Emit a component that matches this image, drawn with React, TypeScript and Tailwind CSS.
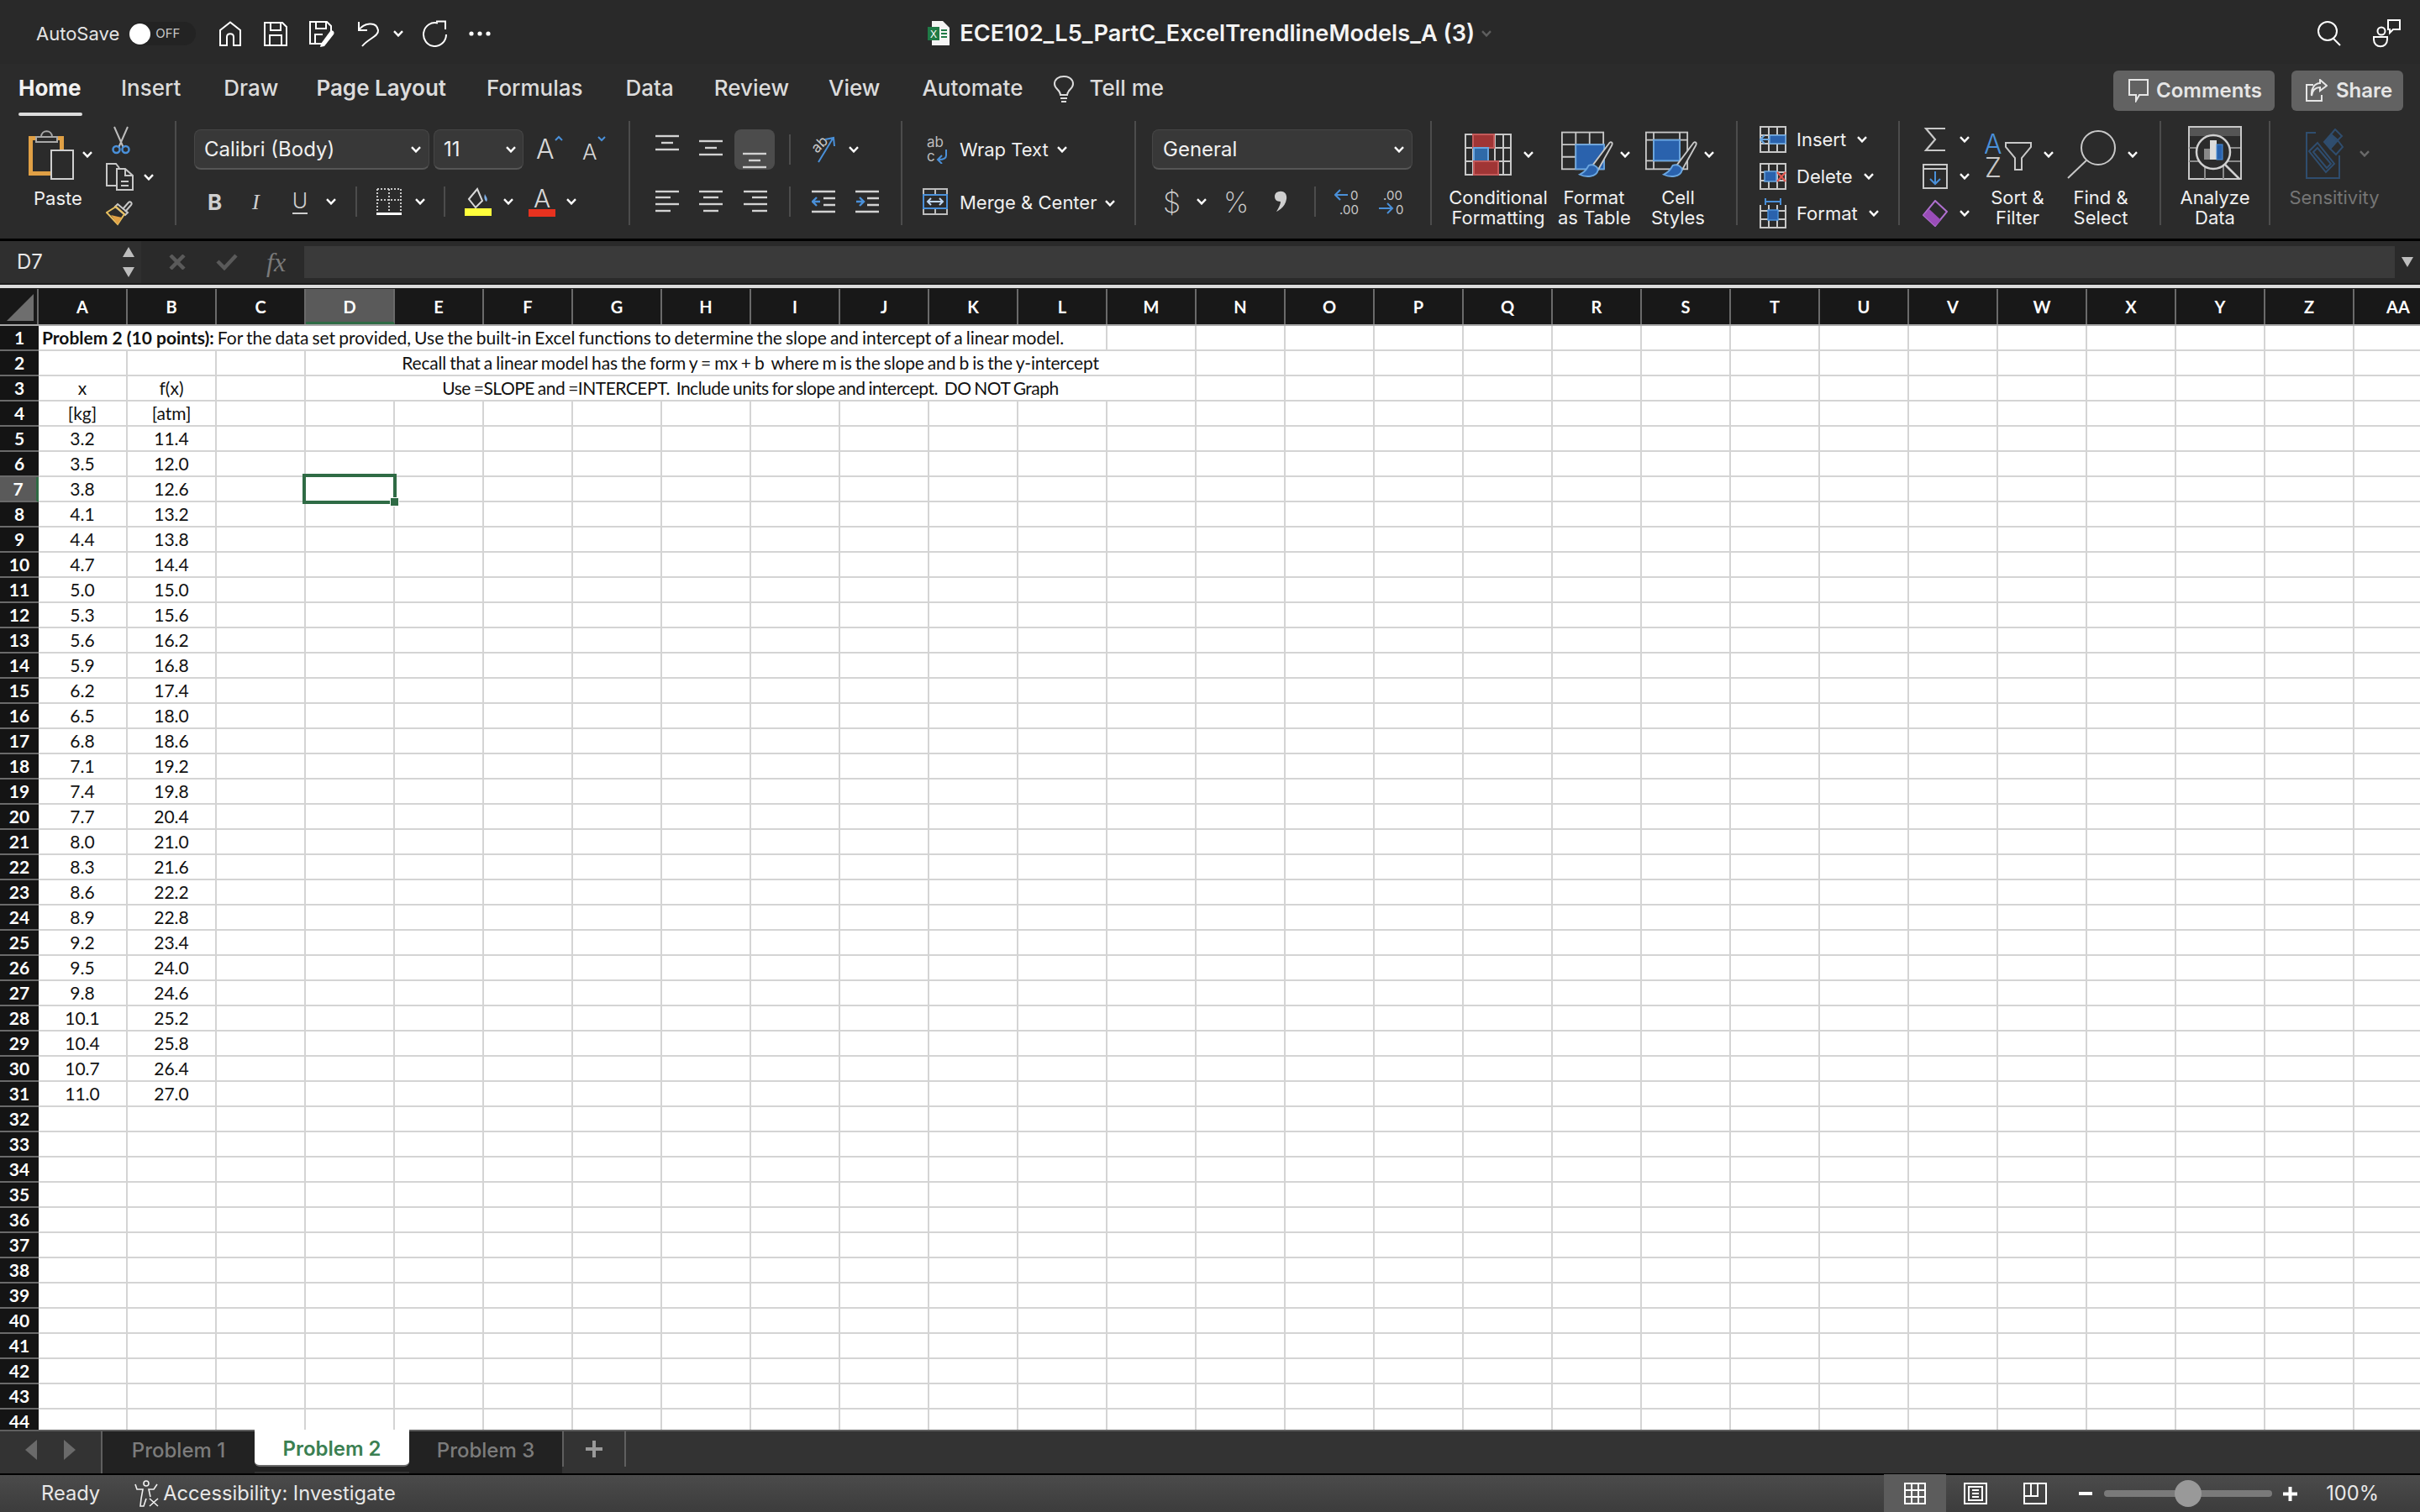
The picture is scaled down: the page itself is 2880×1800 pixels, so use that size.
import React from "react";

const UI = "font-['Inter','Liberation_Sans',sans-serif]";
const CELL = "font-['Lato','Open_Sans',sans-serif]";

const Chev = ({ c = "#ffffff" }: { c?: string }) => (
  <svg className="w-[12px] h-[8px] shrink-0" viewBox="0 0 12 8" fill="none" stroke={c} strokeWidth="2.4">
    <path d="M1 1.2 L6 6.4 L11 1.2" />
  </svg>
);
const Sep = () => <div className="w-[2px] h-[124px] bg-[#4c4c4c] shrink-0" />;
const MiniSep = () => <div className="w-[2px] h-[36px] bg-[#4c4c4c] shrink-0" />;

const Lines = ({ ys }: { ys: [number, number, number][] }) => (
  <svg className="w-[28px] h-[28px] shrink-0" viewBox="0 0 28 28" stroke="#d2d2d2" strokeWidth="2.4">
    {ys.map(([y, a, b], i) => (
      <line key={i} x1={a} x2={b} y1={y} y2={y} />
    ))}
  </svg>
);

const GridLines = ({ w, h, xs, ys }: { w: number; h: number; xs: number[]; ys: number[] }) => (
  <g stroke="#c8c8c8" strokeWidth="2" fill="none">
    <rect x="1" y="1" width={w - 2} height={h - 2} />
    {xs.map((x) => (
      <line key={x} x1={x} x2={x} y1="1" y2={h - 1} />
    ))}
    {ys.map((y) => (
      <line key={y} y1={y} y2={y} x1="1" x2={w - 1} />
    ))}
  </g>
);

const PaintBrush = () => (
  <g>
    <path d="M38 48 L62 16 C64 12 68 14 66 18 L47 52" fill="#2b2b2b" stroke="#c8c8c8" strokeWidth="2" />
    <path d="M36 44 C32 52 28 54 24 56 C32 60 46 60 48 50 C48 46 42 42 36 44 Z" fill="#2a62ad" stroke="#6aa6e0" strokeWidth="2" />
  </g>
);

const columns = ["A","B","C","D","E","F","G","H","I","J","K","L","M","N","O","P","Q","R","S","T","U","V","W","X","Y","Z","AA"];
const xs = ["3.2","3.5","3.8","4.1","4.4","4.7","5.0","5.3","5.6","5.9","6.2","6.5","6.8","7.1","7.4","7.7","8.0","8.3","8.6","8.9","9.2","9.5","9.8","10.1","10.4","10.7","11.0"];
const fs = ["11.4","12.0","12.6","13.2","13.8","14.4","15.0","15.6","16.2","16.8","17.4","18.0","18.6","19.2","19.8","20.4","21.0","21.6","22.2","22.8","23.4","24.0","24.6","25.2","25.8","26.4","27.0"];

const Cell = ({ children }: { children?: React.ReactNode }) => (
  <div className="h-[28px] border-r-2 border-[#d4d4d4] text-center leading-[28px] text-[#111111]">{children}</div>
);

function Row({ n }: { n: number }) {
  const cells: React.ReactNode[] = [];
  if (n === 1) {
    cells.push(
      <div key="m" className="col-span-12 h-[28px] border-r-2 border-[#d4d4d4] pl-[4px] leading-[28px] whitespace-nowrap text-[#111111] [word-spacing:-1.3px]">
        <span className="font-bold [word-spacing:0px]">Problem 2 (10 points):</span> For the data set provided, Use the built-in Excel functions to determine the slope and intercept of a linear model.
      </div>
    );
    for (let i = 12; i < 27; i++) cells.push(<Cell key={i} />);
  } else if (n === 2 || n === 3) {
    const left = n === 3 ? ["x", "f(x)", ""] : ["", "", ""];
    left.forEach((t, i) => cells.push(<Cell key={i}>{t}</Cell>));
    cells.push(
      <div
        key="m"
        className={
          "col-span-10 h-[28px] border-r-2 border-[#d4d4d4] text-center leading-[28px] whitespace-pre text-[#111111] [word-spacing:-1px] " +
          (n === 2 ? "tracking-[-0.18px]" : "tracking-[-0.5px]")
        }
      >
        {n === 2
          ? "Recall that a linear model has the form y = mx + b  where m is the slope and b is the y-intercept"
          : "Use =SLOPE and =INTERCEPT.  Include units for slope and intercept.  DO NOT Graph"}
      </div>
    );
    for (let i = 13; i < 27; i++) cells.push(<Cell key={i} />);
  } else {
    const a = n === 4 ? "[kg]" : n <= 31 ? xs[n - 5] : "";
    const b = n === 4 ? "[atm]" : n <= 31 ? fs[n - 5] : "";
    for (let i = 0; i < 27; i++) cells.push(<Cell key={i}>{i === 0 ? a : i === 1 ? b : ""}</Cell>);
  }
  const active = n === 7;
  return (
    <div className="flex h-[30px]">
      <div
        className={
          "w-[46px] shrink-0 text-center font-bold text-white text-[21px] leading-[28px] border-b-2 border-[#6a6a6a] " +
          (active ? "bg-[#5a5a5a] border-r-[3px] border-r-[#2f6b45]" : "bg-[#141414]")
        }
      >
        {n}
      </div>
      <div className="grid grid-cols-[repeat(27,106px)] border-b-2 border-[#d4d4d4] h-[30px] bg-white">{cells}</div>
    </div>
  );
}

export default function App() {
  const rows = Array.from({ length: 44 }, (_, i) => i + 1);
  return (
    <div className={"w-[2880px] h-[1800px] overflow-hidden flex flex-col bg-[#2b2b2b] text-white " + UI}>
      {/* Title bar */}
      <div className="h-[76px] pt-[4px] bg-[#292929] flex items-center relative shrink-0">
        <span className="ml-[43px] text-[22px] text-[#e4e4e4]">AutoSave</span>
        <div className="ml-[12px] w-[79px] h-[28px] rounded-full bg-[#232323] flex items-center">
          <div className="w-[25px] h-[25px] rounded-full bg-white shrink-0" />
          <span className="ml-[6px] text-[15px] text-[#c8c8c8]">OFF</span>
        </div>
        <svg className="ml-[27px] w-[28px] h-[30px] shrink-0" viewBox="0 0 28 30" fill="none" stroke="#fff" strokeWidth="2">
          <path d="M2 29 V11 L14 1.5 L26 11 V29 H18 V19 C18 14 10 14 10 19 V29 Z" />
        </svg>
        <svg className="ml-[26px] w-[28px] h-[30px] shrink-0" viewBox="0 0 28 30" fill="none" stroke="#fff" strokeWidth="2">
          <path d="M2 2 H22 L27 7 V29 H1 V2 Z" />
          <path d="M8 2 V11 H20 V2 M7 29 V17 H21 V29" />
        </svg>
        <svg className="ml-[26px] w-[30px] h-[32px] shrink-0" viewBox="0 0 30 32" fill="none" stroke="#fff" strokeWidth="2">
          <path d="M15 28 H1 V2 H21 L26 7 V14" />
          <path d="M8 2 V10 H20 V2 M7 27 V17 H16" />
          <path d="M14 28 L25 13 C27 11 31 14 29 17 L18 31 L13 32 Z" fill="#fff" stroke="none" />
        </svg>
        <svg className="ml-[26px] w-[28px] h-[32px] shrink-0" viewBox="0 0 28 32" fill="none" stroke="#fff" strokeWidth="2">
          <path d="M3 2 V12 H13" />
          <path d="M3 12 C8 4 24 0 26 12 C27 19 14 22 7 31" />
        </svg>
        <div className="ml-[16px]"><Chev /></div>
        <svg className="ml-[21px] w-[32px] h-[32px] shrink-0" viewBox="0 0 32 32" fill="none" stroke="#fff" strokeWidth="2">
          <path d="M20 3.5 A13.5 14 0 1 0 30 17" />
          <path d="M18 1.5 H29 V11" />
        </svg>
        <svg className="ml-[25px] w-[26px] h-[6px] shrink-0" viewBox="0 0 26 6" fill="#fff">
          <circle cx="3" cy="3" r="2.6" /><circle cx="13" cy="3" r="2.6" /><circle cx="23" cy="3" r="2.6" />
        </svg>
        <div className="ml-[520px] flex items-center">
          <svg className="w-[26px] h-[30px] shrink-0" viewBox="0 0 26 30">
            <path d="M5 0 H18 L26 8 V29 H5 Z" fill="#f4f4f4" />
            <rect x="0" y="7" width="14" height="16" fill="#1f7a46" />
            <text x="3" y="19.5" fontSize="12" fill="#fff" fontFamily="Liberation Sans">X</text>
            <path d="M16 11 H23 M16 15 H23 M16 19 H23" stroke="#1f7a46" strokeWidth="2" />
          </svg>
          <span className="ml-[12px] text-[27.2px] font-semibold whitespace-nowrap text-[#f4f4f4]">ECE102_L5_PartC_ExcelTrendlineModels_A (3)</span>
          <div className="ml-[8px]"><Chev c="#5e5e5e" /></div>
        </div>
        <svg className="ml-auto w-[28px] h-[30px] shrink-0" viewBox="0 0 28 30" fill="none" stroke="#fff" strokeWidth="2">
          <circle cx="12" cy="12" r="11" />
          <path d="M19 21 L27 29" />
        </svg>
        <svg className="ml-[38px] mr-[22px] w-[34px] h-[34px] shrink-0" viewBox="0 0 34 34" fill="none" stroke="#fff" strokeWidth="2">
          <circle cx="10" cy="14" r="4.5" />
          <path d="M1 21 H17 V24 C17 35 1 35 1 24 Z" />
          <path d="M18 1 H32 V12 H24 L20 16 V12 H18 Z" />
        </svg>
      </div>

      {/* Tab row */}
      <div className="h-[62px] bg-[#2b2b2b] flex shrink-0 relative text-[26px] text-[#dcdcdc] whitespace-nowrap">
        <div className="ml-[22px] w-[76px] flex flex-col items-stretch shrink-0">
          <span className="h-[58px] leading-[58px] font-bold text-[#f2f2f2]">Home</span>
          <div className="h-[6px] w-[76px] rounded-full bg-[#dcdcdc]" />
        </div>
        <span className="ml-[46px] leading-[58px] font-medium">Insert</span>
        <span className="ml-[51px] leading-[58px] font-medium">Draw</span>
        <span className="ml-[45px] leading-[58px] font-semibold">Page Layout</span>
        <span className="ml-[48px] leading-[58px] font-medium">Formulas</span>
        <span className="ml-[51px] leading-[58px] font-medium">Data</span>
        <span className="ml-[48px] leading-[58px] font-medium">Review</span>
        <span className="ml-[47px] leading-[58px] font-medium">View</span>
        <span className="ml-[50px] leading-[58px] font-medium">Automate</span>
        <svg className="ml-[36px] mt-[14px] w-[26px] h-[32px] shrink-0" viewBox="0 0 26 32" fill="none" stroke="#dcdcdc" strokeWidth="2">
          <path d="M9 23 C9 17 2 16 2 10 C2 4 7 1 13 1 C19 1 24 4 24 10 C24 16 17 17 17 23 Z" />
          <path d="M9 27 H17 M10 31 H16" />
        </svg>
        <span className="ml-[17px] leading-[58px] font-medium">Tell me</span>
        <div className="ml-auto mt-[8px] h-[48px] w-[192px] rounded-[6px] bg-[#626262] flex items-center pl-[18px] text-[24px] font-semibold text-[#e6e6e6]">
          <svg className="w-[24px] h-[28px] shrink-0" viewBox="0 0 24 28" fill="none" stroke="#e6e6e6" strokeWidth="2">
            <path d="M1 1 H23 V19 H13 L9 26 V19 H1 Z" />
          </svg>
          <span className="ml-[9px]">Comments</span>
        </div>
        <div className="ml-[20px] mr-[20px] mt-[8px] h-[48px] w-[133px] rounded-[6px] bg-[#626262] flex items-center pl-[17px] text-[24px] font-semibold text-[#e6e6e6]">
          <svg className="w-[26px] h-[28px] shrink-0" viewBox="0 0 26 28" fill="none" stroke="#e6e6e6" strokeWidth="2">
            <path d="M9 7 H1 V26 H19 V19" />
            <path d="M7 20 C8 13 12 10 17 10 V14 L25 8 L17 1 V5 C11 5 6 11 7 20 Z" />
          </svg>
          <span className="ml-[10px]">Share</span>
        </div>
      </div>

      {/* Ribbon */}
      <div className="h-[149px] pt-[6px] bg-[#2b2b2b] flex shrink-0 items-start border-b-[3px] border-black text-[#f0f0f0]">
        {/* Clipboard */}
        <div className="w-[208px] h-[124px] flex shrink-0">
          <div className="pl-[34px] pt-[10px] flex flex-col w-[110px] shrink-0">
            <div className="flex items-center">
              <svg className="w-[54px] h-[60px] shrink-0" viewBox="0 0 54 60" fill="none">
                <rect x="2.5" y="10.5" width="37" height="42" stroke="#e0a045" strokeWidth="5" />
                <path d="M9 9 H34 V15 H9 Z" fill="#2b2b2b" stroke="#a8a8a8" strokeWidth="2" />
                <path d="M15 9 C15 0 28 0 28 9" stroke="#a8a8a8" strokeWidth="2" />
                <rect x="27" y="25" width="26" height="34" fill="#2b2b2b" stroke="#cfcfcf" strokeWidth="2" />
              </svg>
              <div className="ml-[10px]"><Chev /></div>
            </div>
            <span className="ml-[6px] mt-[9px] text-[22px] leading-[26px]">Paste</span>
          </div>
          <div className="ml-[16px] pt-[6px] flex flex-col gap-[10px]">
            <svg className="w-[24px] h-[34px] shrink-0 ml-[6px]" viewBox="0 0 24 34" fill="none">
              <path d="M4 1 L15 26 M20 1 L9 26" stroke="#bdbdbd" strokeWidth="2" />
              <circle cx="6.5" cy="28" r="4" stroke="#4a90d9" strokeWidth="2.5" />
              <circle cx="17.5" cy="28" r="4" stroke="#4a90d9" strokeWidth="2.5" />
            </svg>
            <div className="flex items-center">
              <svg className="w-[33px] h-[33px] shrink-0" viewBox="0 0 33 33" fill="none" stroke="#c8c8c8" strokeWidth="2">
                <path d="M12 27 H1 V1 H12 L16 6" />
                <path d="M13 7 H23 L32 15 V32 H13 Z" />
                <path d="M23 7 V15 H32 M18 22 H27 M18 27 H27" />
              </svg>
              <div className="ml-[12px]"><Chev /></div>
            </div>
            <svg className="w-[32px] h-[32px] shrink-0" viewBox="0 0 32 32" fill="none">
              <path d="M20 12 L27 4 C29 2 32 5 30 7 L23 15" stroke="#c8c8c8" strokeWidth="2" />
              <path d="M14 6 L26 16 L23 19 L11 9 Z" stroke="#c8c8c8" strokeWidth="2" />
              <path d="M12 9 L1 16 L14 30 L22 18 Z" stroke="#e8c060" strokeWidth="2" />
              <path d="M6 19 L14 30 L19 22 Z" fill="#e0a045" />
            </svg>
          </div>
        </div>
        <Sep />
        {/* Font */}
        <div className="w-[538px] h-[124px] pt-[10px] flex flex-col gap-[14px] shrink-0">
          <div className="h-[48px] flex items-center">
            <div className="ml-[21px] w-[280px] h-[48px] rounded-[8px] bg-[#383838] border border-[#464646] border-b-2 border-b-[#565656] flex items-center justify-between pl-[11px] pr-[9px] shrink-0">
              <span className="text-[24px]">Calibri (Body)</span>
              <Chev />
            </div>
            <div className="ml-[5px] w-[107px] h-[48px] rounded-[8px] bg-[#383838] border border-[#464646] border-b-2 border-b-[#565656] flex items-center justify-between pl-[11px] pr-[8px] shrink-0">
              <span className="text-[24px]">11</span>
              <Chev />
            </div>
            <div className="ml-[15px] w-[30px] h-[34px] relative flex items-end shrink-0">
              <span className="text-[32px] leading-[34px] font-light text-[#d8d8d8]">A</span>
              <svg className="absolute left-[22px] top-0 w-[10px] h-[8px]" viewBox="0 0 10 8" fill="none" stroke="#4a90d9" strokeWidth="2">
                <path d="M1 6 L5 2 L9 6" />
              </svg>
            </div>
            <div className="ml-[25px] w-[27px] h-[34px] relative flex items-end shrink-0">
              <span className="text-[26px] leading-[28px] font-light text-[#d8d8d8]">A</span>
              <svg className="absolute left-[18px] top-0 w-[10px] h-[8px]" viewBox="0 0 10 8" fill="none" stroke="#4a90d9" strokeWidth="2">
                <path d="M1 2 L5 6 L9 2" />
              </svg>
            </div>
          </div>
          <div className="h-[48px] flex items-center">
            <span className="ml-[37px] w-[16px] text-[26px] font-bold text-[#cfcfcf]">B</span>
            <span className="ml-[37px] w-[12px] text-[26px] italic font-light text-[#cfcfcf] font-['Liberation_Serif',serif]">I</span>
            <div className="ml-[36px] w-[18px] flex flex-col items-center text-[#cfcfcf]">
              <span className="text-[25px] font-light leading-[26px]">U</span>
              <div className="w-[18px] h-[2px] bg-[#cfcfcf] mt-[1px]" />
            </div>
            <div className="ml-[22px]"><Chev /></div>
            <div className="ml-[23px]"><MiniSep /></div>
            <svg className="ml-[23px] w-[30px] h-[32px] shrink-0" viewBox="0 0 30 32" fill="none" stroke="#c8c8c8" strokeWidth="2" strokeDasharray="2 2">
              <path d="M1 1 H29 V28 M1 1 V28 M15 1 V28 M1 14 H29" />
              <path d="M0 30.5 H30" stroke="#fff" strokeWidth="3" strokeDasharray="none" />
            </svg>
            <div className="ml-[16px]"><Chev /></div>
            <div className="ml-[22px]"><MiniSep /></div>
            <svg className="ml-[23px] w-[32px] h-[34px] shrink-0" viewBox="0 0 32 34" fill="none">
              <path d="M5 14 L15 2 L21 16 L13 24 Z" stroke="#d8d8d8" strokeWidth="2" />
              <path d="M24 8 C26 12 28 14 26 17 C23 15 23 11 24 8 Z" fill="#7fb0e8" />
              <rect x="0" y="25" width="32" height="9" fill="#ffff3c" />
            </svg>
            <div className="ml-[14px]"><Chev /></div>
            <div className="ml-[18px] w-[32px] flex flex-col items-center shrink-0">
              <span className="text-[30px] font-light leading-[26px] text-[#d8d8d8]">A</span>
              <div className="w-[32px] h-[9px] bg-[#e8321f]" />
            </div>
            <div className="ml-[13px]"><Chev /></div>
          </div>
        </div>
        <Sep />
        {/* Alignment */}
        <div className="w-[322px] h-[124px] pt-[10px] flex flex-col gap-[14px] shrink-0">
          <div className="h-[48px] flex items-center">
            <div className="ml-[30px] -mt-[8px]"><Lines ys={[[2, 0, 28], [10, 7, 21], [18, 0, 28]]} /></div>
            <div className="ml-[24px] -mt-[2px]"><Lines ys={[[5, 0, 28], [13, 7, 21], [21, 0, 28]]} /></div>
            <div className="ml-[14px] w-[48px] h-[48px] rounded-[8px] bg-[#4c4c4c] flex items-end justify-center pb-[0px] shrink-0">
              <Lines ys={[[9, 0, 28], [17, 7, 21], [25, 0, 28]]} />
            </div>
            <div className="ml-[17px]"><MiniSep /></div>
            <svg className="ml-[24px] w-[32px] h-[34px] shrink-0" viewBox="0 0 32 34" fill="none">
              <text x="1" y="17" fontSize="17" fill="#c8c8c8" fontFamily="Inter" transform="rotate(-45 10 12)">ab</text>
              <path d="M9 32 L26 4 M17 5 L27 3 L28 13" stroke="#4a90d9" strokeWidth="2" />
            </svg>
            <div className="ml-[13px]"><Chev /></div>
          </div>
          <div className="h-[48px] flex items-center">
            <div className="ml-[30px]"><Lines ys={[[2, 0, 28], [9, 0, 18], [17, 0, 28], [25, 0, 18]]} /></div>
            <div className="ml-[24px]"><Lines ys={[[2, 0, 28], [9, 5, 23], [17, 0, 28], [25, 5, 23]]} /></div>
            <div className="ml-[25px]"><Lines ys={[[2, 0, 28], [9, 10, 28], [17, 0, 28], [25, 10, 28]]} /></div>
            <div className="ml-[26px]"><MiniSep /></div>
            <svg className="ml-[25px] w-[28px] h-[28px] shrink-0" viewBox="0 0 28 28" fill="none" stroke="#d2d2d2" strokeWidth="2.4">
              <path d="M0 2 H28 M14 10 H28 M14 18 H28 M0 26 H28" />
              <path d="M10 14 H1 M6 9 L1 14 L6 19" stroke="#4a90d9" />
            </svg>
            <svg className="ml-[24px] w-[28px] h-[28px] shrink-0" viewBox="0 0 28 28" fill="none" stroke="#d2d2d2" strokeWidth="2.4">
              <path d="M0 2 H28 M14 10 H28 M14 18 H28 M0 26 H28" />
              <path d="M1 14 H10 M5 9 L10 14 L5 19" stroke="#4a90d9" />
            </svg>
          </div>
        </div>
        <Sep />
        {/* Wrap / merge */}
        <div className="w-[276px] h-[124px] pt-[10px] flex flex-col gap-[14px] shrink-0 text-[22px]">
          <div className="h-[48px] flex items-center">
            <svg className="ml-[29px] w-[27px] h-[34px] shrink-0" viewBox="0 0 27 34" fill="none">
              <text x="0" y="14" fontSize="17" fill="#bdbdbd" fontFamily="Inter">ab</text>
              <text x="0" y="31" fontSize="17" fill="#bdbdbd" fontFamily="Inter">c</text>
              <path d="M23 17 V24 C23 28 20 29 14 29 M18 24 L13 29 L18 34" stroke="#4a90d9" strokeWidth="2" />
            </svg>
            <span className="ml-[12px]">Wrap Text</span>
            <div className="ml-[10px]"><Chev /></div>
          </div>
          <div className="h-[48px] flex items-center">
            <svg className="ml-[24px] w-[30px] h-[32px] shrink-0" viewBox="0 0 30 32" fill="none">
              <path d="M1 1 H29 V31 H1 Z M1 8 H29 M1 24 H29 M15 1 V8 M15 24 V31" stroke="#bdbdbd" strokeWidth="2" />
              <path d="M1 8 H29 V24 H1 Z" stroke="#4a90d9" strokeWidth="2" />
              <path d="M6 16 H24 M10 12 L6 16 L10 20 M20 12 L24 16 L20 20" stroke="#bdd6f2" strokeWidth="2" />
            </svg>
            <span className="ml-[14px] pt-[3px]">Merge &amp; Center</span>
            <div className="ml-[10px] pt-[3px]"><Chev /></div>
          </div>
        </div>
        <Sep />
        {/* Number */}
        <div className="w-[350px] h-[124px] pt-[10px] flex flex-col gap-[14px] shrink-0">
          <div className="h-[48px] flex items-center">
            <div className="ml-[19px] w-[310px] h-[48px] rounded-[8px] bg-[#383838] border border-[#464646] border-b-2 border-b-[#565656] flex items-center justify-between pl-[12px] pr-[9px] shrink-0">
              <span className="text-[24px]">General</span>
              <Chev />
            </div>
          </div>
          <div className="h-[48px] flex items-center text-[#cfcfcf]">
            <span className="ml-[32px] w-[20px] text-[34px] font-extralight">$</span>
            <div className="ml-[20px]"><Chev /></div>
            <span className="ml-[20px] w-[30px] text-[34px] font-extralight">%</span>
            <svg className="ml-[30px] w-[16px] h-[26px] shrink-0" viewBox="0 0 16 26" fill="#cfcfcf">
              <path d="M7 1 C12 0 16 4 15 10 C14 17 9 22 3 25 C6 20 8 16 8 13 C3 13 1 10 1 7 C1 3 4 1 7 1 Z" />
            </svg>
            <div className="ml-[32px]"><MiniSep /></div>
            <svg className="ml-[22px] w-[32px] h-[32px] shrink-0" viewBox="0 0 32 32">
              <text x="19" y="14" fontSize="15" fill="#c8c8c8" fontFamily="Inter">0</text>
              <text x="6" y="31" fontSize="15" fill="#c8c8c8" fontFamily="Inter">.00</text>
              <path d="M16 8 H1 M7 2 L1 8 L7 14" stroke="#4a90d9" strokeWidth="2" fill="none" />
            </svg>
            <svg className="ml-[20px] w-[32px] h-[32px] shrink-0" viewBox="0 0 32 32">
              <text x="6" y="14" fontSize="15" fill="#c8c8c8" fontFamily="Inter">.00</text>
              <text x="21" y="31" fontSize="15" fill="#c8c8c8" fontFamily="Inter">0</text>
              <path d="M1 24 H17 M11 18 L17 24 L11 30" stroke="#4a90d9" strokeWidth="2" fill="none" />
            </svg>
          </div>
        </div>
        <Sep />
        {/* Styles */}
        <div className="w-[362px] h-[124px] pt-[10px] flex shrink-0 text-[22px] leading-[24px] text-center whitespace-nowrap">
          <div className="ml-[8px] w-[142px] shrink-0 flex flex-col">
            <div className="h-[60px] flex items-center pl-[31px] shrink-0">
              <svg className="w-[56px] h-[50px] shrink-0" viewBox="0 0 56 50" fill="none">
                <GridLines w={56} h={50} xs={[10, 36, 46]} ys={[17, 33]} />
                <rect x="10" y="1" width="25" height="16" fill="#a03535" stroke="#c45a5a" strokeWidth="2" />
                <rect x="11" y="17" width="17" height="16" fill="#2f6aa8" stroke="#6aa6e0" strokeWidth="2" />
                <rect x="11" y="33" width="29" height="16" fill="#a03535" stroke="#c45a5a" strokeWidth="2" />
              </svg>
              <div className="ml-[14px]"><Chev /></div>
            </div>
            <span className="mt-[9px]">Conditional<br />Formatting</span>
          </div>
          <div className="w-[86px] shrink-0 flex flex-col">
            <div className="h-[60px] flex items-center pl-[4px] shrink-0">
              <svg className="w-[62px] h-[60px] shrink-0 overflow-visible" viewBox="0 0 68 60" fill="none">
                <GridLines w={56} h={50} xs={[19, 37]} ys={[17, 33]} />
                <rect x="19" y="17" width="37" height="32" fill="#2a62ad" stroke="#6aa6e0" strokeWidth="2" />
                <PaintBrush />
              </svg>
              <div className="ml-[8px]"><Chev /></div>
            </div>
            <span className="mt-[9px]">Format<br />as Table</span>
          </div>
          <div className="w-[114px] shrink-0 flex flex-col">
            <div className="h-[60px] flex items-center pl-[18px] shrink-0">
              <svg className="w-[62px] h-[60px] shrink-0 overflow-visible" viewBox="0 0 68 60" fill="none">
                <GridLines w={56} h={50} xs={[11, 45]} ys={[11, 38]} />
                <rect x="11" y="11" width="34" height="27" fill="#2a62ad" stroke="#6aa6e0" strokeWidth="2" />
                <PaintBrush />
              </svg>
              <div className="ml-[8px]"><Chev /></div>
            </div>
            <span className="mt-[9px]">Cell<br />Styles</span>
          </div>
        </div>
        <Sep />
        {/* Cells */}
        <div className="w-[191px] h-[124px] flex flex-col shrink-0 text-[22px]">
          <div className="h-[44px] flex items-center pl-[26px] shrink-0">
            <svg className="w-[32px] h-[32px] shrink-0" viewBox="0 0 32 32" fill="none">
              <GridLines w={32} h={32} xs={[11, 21]} ys={[11, 21]} />
              <rect x="12" y="11" width="19" height="10" fill="#2a62ad" stroke="#6aa6e0" strokeWidth="1.5" />
              <path d="M11 16 H1 M6 11 L1 16 L6 21" stroke="#6aa6e0" strokeWidth="2" />
            </svg>
            <span className="ml-[12px]">Insert</span>
            <div className="ml-[13px]"><Chev /></div>
          </div>
          <div className="h-[44px] flex items-center pl-[26px] shrink-0">
            <svg className="w-[32px] h-[32px] shrink-0" viewBox="0 0 32 32" fill="none">
              <GridLines w={32} h={32} xs={[11, 21]} ys={[11, 21]} />
              <rect x="6" y="10" width="14" height="12" fill="#2a62ad" stroke="#6aa6e0" strokeWidth="1.5" />
              <path d="M21 11 L31 22 M31 11 L21 22" stroke="#e0574f" strokeWidth="2.4" />
            </svg>
            <span className="ml-[12px]">Delete</span>
            <div className="ml-[13px]"><Chev /></div>
          </div>
          <div className="h-[44px] flex items-center pl-[26px] shrink-0">
            <svg className="w-[32px] h-[36px] shrink-0" viewBox="0 0 32 36" fill="none">
              <path d="M1 8 V35 H31 V8 M1 15 H31 M1 25 H31 M11 8 V35 M21 8 V35" stroke="#c8c8c8" strokeWidth="2" />
              <rect x="10" y="14" width="12" height="12" fill="#2a62ad" stroke="#4a90d9" strokeWidth="1.5" />
              <path d="M7 4 H25 M7 0 V8 M25 0 V8" stroke="#4a90d9" strokeWidth="2" />
            </svg>
            <span className="ml-[12px]">Format</span>
            <div className="ml-[13px]"><Chev /></div>
          </div>
        </div>
        <Sep />
        {/* Editing */}
        <div className="w-[309px] h-[124px] flex shrink-0 text-[22px] leading-[24px] text-center">
          <div className="w-[83px] shrink-0 pl-[27px] flex flex-col">
            <div className="h-[44px] flex items-center shrink-0">
              <svg className="w-[30px] h-[30px] shrink-0" viewBox="0 0 30 30" fill="none" stroke="#c8c8c8" strokeWidth="2.2">
                <path d="M27 2 H4 L15 15 L4 28 H27" />
              </svg>
              <div className="ml-[14px]"><Chev /></div>
            </div>
            <div className="h-[44px] flex items-center shrink-0">
              <svg className="w-[30px] h-[30px] shrink-0" viewBox="0 0 30 30" fill="none">
                <path d="M1 1 H29 V29 H1 Z M1 6 H29" stroke="#c8c8c8" strokeWidth="2" />
                <path d="M15 9 V24 M9 18 L15 24 L21 18" stroke="#4a90d9" strokeWidth="2" />
              </svg>
              <div className="ml-[14px]"><Chev /></div>
            </div>
            <div className="h-[44px] flex items-center shrink-0">
              <svg className="w-[30px] h-[32px] shrink-0" viewBox="0 0 30 32" fill="none">
                <path d="M15 1 L29 14 L15 31 L1 18 Z" stroke="#b070d0" strokeWidth="2" />
                <path d="M8 11 L22 24 L15 31 L1 18 Z" fill="#9a4db8" />
              </svg>
              <div className="ml-[14px]"><Chev /></div>
            </div>
          </div>
          <div className="w-[114px] shrink-0 pt-[10px] flex flex-col">
            <div className="h-[60px] flex items-center pl-[18px] shrink-0">
              <svg className="w-[56px] h-[56px] shrink-0" viewBox="0 0 56 56" fill="none">
                <text x="-1" y="27" fontSize="32" fill="#4a90d9" fontWeight="300" fontFamily="Inter">A</text>
                <text x="0" y="55" fontSize="32" fill="#c8c8c8" fontWeight="300" fontFamily="Inter">Z</text>
                <path d="M25 14 H55 V19 L44 32 V46 H36 V32 L25 19 Z" stroke="#c8c8c8" strokeWidth="2" />
              </svg>
              <div className="ml-[14px]"><Chev /></div>
            </div>
            <span className="mt-[9px]">Sort &amp;<br />Filter</span>
          </div>
          <div className="w-[84px] shrink-0 pt-[10px] flex flex-col">
            <div className="h-[60px] flex items-center pl-[2px] shrink-0">
              <svg className="w-[58px] h-[58px] shrink-0" viewBox="0 0 58 58" fill="none" stroke="#c8c8c8" strokeWidth="2">
                <ellipse cx="37" cy="21" rx="20" ry="20" />
                <path d="M23 36 L1 57" />
              </svg>
              <div className="ml-[14px]"><Chev /></div>
            </div>
            <span className="mt-[9px] whitespace-nowrap">Find &amp;<br />Select</span>
          </div>
        </div>
        <Sep />
        {/* Analyze */}
        <div className="w-[128px] h-[124px] pt-[6px] flex flex-col items-center shrink-0 text-[22px] leading-[24px] text-center">
          <svg className="w-[64px] h-[64px] shrink-0" viewBox="0 0 64 64" fill="none">
            <rect x="1" y="1" width="62" height="62" stroke="#c8c8c8" strokeWidth="2" />
            <rect x="2" y="2" width="60" height="10" fill="#555" />
            <path d="M1 26 H62 M1 42 H62 M20 42 V63 M42 42 V63" stroke="#8a8a8a" strokeWidth="2" />
            <circle cx="30" cy="31" r="20" fill="#2b2b2b" stroke="#d0d0d0" strokeWidth="2.5" />
            <path d="M44 46 L62 64" stroke="#d0d0d0" strokeWidth="2.5" />
            <rect x="19" y="27" width="7" height="13" fill="#888" />
            <rect x="26" y="17" width="8" height="23" fill="#dcdcdc" />
            <rect x="34" y="22" width="7" height="18" fill="#2a62ad" stroke="#4a90d9" />
          </svg>
          <span className="mt-[9px]">Analyze<br />Data</span>
        </div>
        <Sep />
        {/* Sensitivity */}
        <div className="w-[178px] h-[124px] pt-[8px] flex flex-col shrink-0 text-[22px] leading-[24px] text-[#757575]">
          <div className="h-[62px] flex items-center pl-[42px] shrink-0">
            <svg className="w-[50px] h-[60px] shrink-0" viewBox="0 0 50 60" fill="none" stroke="#2f4d6e" strokeWidth="2">
              <path d="M12 5 H1 V59 H40 V32" />
              <path d="M4 27 L14 17 L34 42 L24 52 Z M9 28 L14 23 L30 42 L25 47 Z" />
              <path d="M22 16 L30 7 L38 14 L29 24 Z" fill="#2f4d6e" />
              <path d="M30 7 L35 1 L43 9 L38 14 Z" />
              <path d="M29 24 L38 14 L44 22 L36 31 Z" />
            </svg>
            <div className="ml-[14px]"><Chev c="#6a6a6a" /></div>
          </div>
          <span className="mt-[9px] w-[152px] text-center">Sensitivity</span>
        </div>
      </div>

      {/* Formula bar */}
      <div className="h-[50px] bg-[#2a2a2a] flex shrink-0 items-center relative">
        <div className="w-[168px] h-[50px] bg-[#2f2f2f] flex items-center shrink-0">
          <span className="ml-[20px] text-[24px] text-[#e8e8e8]">D7</span>
          <svg className="ml-auto mr-[8px] w-[14px] h-[36px] shrink-0" viewBox="0 0 14 36" fill="#bdbdbd">
            <path d="M7 0 L14 12 H0 Z M7 36 L0 24 H14 Z" />
          </svg>
        </div>
        <svg className="ml-[33px] w-[20px] h-[18px] shrink-0" viewBox="0 0 20 18" stroke="#5a5a5a" strokeWidth="4.5">
          <path d="M2 1 L18 17 M18 1 L2 17" />
        </svg>
        <svg className="ml-[36px] w-[26px] h-[20px] shrink-0" viewBox="0 0 26 20" fill="none" stroke="#5a5a5a" strokeWidth="4.5">
          <path d="M2 9 L10 17 L24 2" />
        </svg>
        <span className="ml-[34px] w-[30px] text-[32px] italic text-[#7a7a7a] font-['Liberation_Serif',serif]">fx</span>
        <div className="ml-[15px] h-[38px] w-[2488px] bg-[#3a3a3a] shrink-0" />
        <svg className="ml-[8px] w-[14px] h-[12px] shrink-0" viewBox="0 0 14 12" fill="#bdbdbd">
          <path d="M0 0 H14 L7 12 Z" />
        </svg>
      </div>
      <div className="h-[7px] shrink-0 bg-[#1c1c1c] flex flex-col justify-center">
        <div className="h-[4px] bg-[#dcdcdc]" />
      </div>

      {/* Sheet */}
      <div className={"h-[1358px] shrink-0 overflow-hidden relative bg-white text-[21px] " + CELL}>
        <div className="flex h-[44px] bg-[#181818] border-b-[2px] border-[#a8a8a8]">
          <div className="w-[46px] shrink-0 border-r-2 border-[#6a6a6a] flex items-end justify-end pr-[4px] pb-[4px]">
            <svg className="w-[32px] h-[32px]" viewBox="0 0 32 32" fill="#6e6e6e">
              <path d="M32 0 V32 H0 Z" />
            </svg>
          </div>
          <div className="grid grid-cols-[repeat(27,106px)]">
            {columns.map((c) => (
              <div
                key={c}
                className={
                  "h-[42px] border-r-2 border-[#6a6a6a] text-center text-white font-bold leading-[42px] text-[20px] " +
                  (c === "D" ? "bg-[#5a5a5a] border-b-[3px] border-b-[#2f6b45]" : "")
                }
              >
                {c}
              </div>
            ))}
          </div>
        </div>
        {rows.map((n) => (
          <Row key={n} n={n} />
        ))}
        <div className="absolute left-[360px] top-[220px] w-[112px] h-[36px] border-[4px] border-[#2f6b45]" />
        <div className="absolute left-[464px] top-[248px] w-[11px] h-[11px] bg-[#2f6b45] border border-white" />
      </div>

      {/* Sheet tabs */}
      <div className="h-[52px] bg-[#333333] border-t-2 border-[#5f5f5f] flex shrink-0 text-[24px] font-medium">
        <div className="w-[120px] shrink-0 flex items-center pl-[30px] pb-[6px]">
          <svg className="w-[14px] h-[24px] shrink-0" viewBox="0 0 14 24" fill="#6a6a6a"><path d="M14 0 V24 L0 12 Z" /></svg>
          <svg className="ml-[32px] w-[14px] h-[24px] shrink-0" viewBox="0 0 14 24" fill="#6a6a6a"><path d="M0 0 V24 L14 12 Z" /></svg>
        </div>
        <div className="w-[183px] bg-[#222222] border-l-2 border-[#5f5f5f] text-center leading-[46px] text-[#7c7c7c] shrink-0">Problem 1</div>
        <div className="w-[184px] h-[50px] bg-[#222222] shrink-0 -mt-[2px]">
          <div className="h-[44px] bg-white rounded-b-[6px] border-b-2 border-[#6a6a6a] text-center leading-[46px] text-[#3b7f52] font-semibold">Problem 2</div>
        </div>
        <div className="w-[182px] bg-[#222222] text-center leading-[46px] text-[#7c7c7c] shrink-0">Problem 3</div>
        <div className="w-[76px] h-[42px] border-x-2 border-[#5f5f5f] flex items-center justify-center shrink-0">
          <svg className="w-[20px] h-[20px]" viewBox="0 0 20 20" stroke="#9a9a9a" strokeWidth="4"><path d="M10 0 V20 M0 10 H20" /></svg>
        </div>
      </div>

      {/* Status bar */}
      <div className="h-[46px] bg-gradient-to-b from-[#4b4b4b] to-[#3c3c3c] border-t-2 border-black flex items-center shrink-0 text-[23.7px] text-[#e8e8e8]">
        <span className="ml-[49px]">Ready</span>
        <svg className="ml-[40px] w-[30px] h-[32px] shrink-0" viewBox="0 0 30 32" fill="none" stroke="#f0f0f0" strokeWidth="1.6">
          <circle cx="15" cy="4" r="3" />
          <path d="M2 5 L4 11 L11 11 L9 22 L8 31 L12 31 L15 22 M28 5 L24 11 L18 11 L20 20" />
          <path d="M19 22 L29 31 M29 22 L19 31" />
        </svg>
        <span className="ml-[5px]">Accessibility: Investigate</span>
        <div className="ml-auto h-[46px] w-[74px] bg-[#5c5c5c] flex items-center justify-center shrink-0">
          <svg className="w-[26px] h-[26px]" viewBox="0 0 26 26" fill="none" stroke="#fff" strokeWidth="2">
            <rect x="1" y="1" width="24" height="24" />
            <path d="M9 1 V25 M17 1 V25 M1 9 H25 M1 17 H25" />
          </svg>
        </div>
        <svg className="ml-[21px] w-[28px] h-[26px] shrink-0" viewBox="0 0 28 26" fill="none" stroke="#fff" strokeWidth="2">
          <rect x="1" y="1" width="26" height="24" />
          <rect x="6" y="5" width="16" height="16" />
          <path d="M10 9 H18 M10 13 H18 M10 17 H18" />
        </svg>
        <svg className="ml-[43px] w-[28px] h-[26px] shrink-0" viewBox="0 0 28 26" fill="none" stroke="#fff" strokeWidth="2">
          <rect x="1" y="1" width="26" height="24" />
          <path d="M1 16 H17 V1 M9 1 V16" />
        </svg>
        <div className="ml-[38px] w-[16px] h-[4px] bg-white shrink-0" />
        <div className="ml-[14px] w-[200px] h-[8px] rounded-full bg-[#7a7a7a] relative shrink-0">
          <div className="absolute left-[84px] top-[-12px] w-[32px] h-[32px] rounded-full bg-[#999999]" />
        </div>
        <svg className="ml-[13px] w-[17px] h-[17px] shrink-0" viewBox="0 0 17 17" stroke="#fff" strokeWidth="4"><path d="M8.5 0 V17 M0 8.5 H17" /></svg>
        <span className="ml-[34px] mr-[49px]">100%</span>
      </div>
    </div>
  );
}
